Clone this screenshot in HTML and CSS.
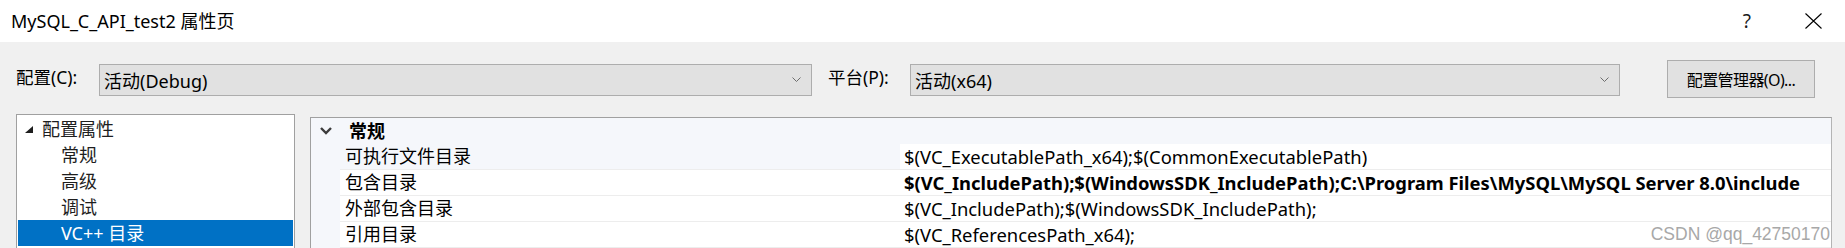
FILE: index.html
```html
<!DOCTYPE html>
<html lang="zh-CN">
<head>
  <meta charset="UTF-8" />
  <title>MySQL_C_API_test2 属性页</title>
  <link rel="stylesheet" href="styles.css">
</head>
<body>
  <div class="dialog">
    <header class="title-bar">
      <div class="title">MySQL_C_API_test2 属性页</div>
      <div class="title-actions">
        <span class="help">?</span>
        <svg class="close" width="17" height="16" viewBox="0 0 17 16">
          <path d="M0.5 0.5 L16.5 15.5 M16.5 0.5 L0.5 15.5" stroke="#000" stroke-width="1.1" fill="none" />
        </svg>
      </div>
    </header>

    <div class="toolbar">
      <label class="field-label label-config">配置(C):</label>
      <div class="combo combo-config">
        <span>活动(Debug)</span>
        <svg class="combo-arrow" width="9" height="6" viewBox="0 0 9 6"><path d="M0.5 0.5 L4.5 4.5 L8.5 0.5" stroke="#6d6d6d" stroke-width="1" fill="none" /></svg>
      </div>
      <label class="field-label label-platform">平台(P):</label>
      <div class="combo combo-platform">
        <span>活动(x64)</span>
        <svg class="combo-arrow" width="9" height="6" viewBox="0 0 9 6"><path d="M0.5 0.5 L4.5 4.5 L8.5 0.5" stroke="#6d6d6d" stroke-width="1" fill="none" /></svg>
      </div>
      <button class="btn-manager">配置管理器(O)...</button>
    </div>

    <div class="main">
      <ul class="tree">
        <li class="tree-node">
          <svg class="tree-toggle" width="9" height="7" viewBox="0 0 9 7"><polygon points="8,0 8,7 0,7" fill="#1e1e1e" /></svg>
          <span>配置属性</span>
        </li>
        <li class="tree-leaf">常规</li>
        <li class="tree-leaf">高级</li>
        <li class="tree-leaf">调试</li>
        <li class="tree-leaf selected">VC++ 目录</li>
      </ul>

      <div class="grid-panel">
        <div class="category">
          <svg class="chevron" width="12" height="8" viewBox="0 0 12 8"><path d="M1 1 L6 6 L11 1" stroke="#3c3c3c" stroke-width="2.4" fill="none" /></svg>
          <span>常规</span>
        </div>
        <div class="prop-row active">
          <div class="prop-name">可执行文件目录</div>
          <div class="prop-value">$(VC_ExecutablePath_x64);$(CommonExecutablePath)</div>
        </div>
        <div class="prop-row">
          <div class="prop-name">包含目录</div>
          <div class="prop-value modified">$(VC_IncludePath);$(WindowsSDK_IncludePath);C:\Program Files\MySQL\MySQL Server 8.0\include</div>
        </div>
        <div class="prop-row">
          <div class="prop-name">外部包含目录</div>
          <div class="prop-value">$(VC_IncludePath);$(WindowsSDK_IncludePath);</div>
        </div>
        <div class="prop-row">
          <div class="prop-name">引用目录</div>
          <div class="prop-value">$(VC_ReferencesPath_x64);</div>
        </div>
        <div class="watermark">CSDN @qq_42750170</div>
      </div>
    </div>
  </div>
</body>
</html>
```

FILE: styles.css
```css
:root {
  --dialog-bg: #f0f0f0;
  --ctrl-bg: #e1e1e1;
  --ctrl-border: #adadad;
  --panel-border: #a0a0a0;
  --panel-bg: #f5f7fb;
  --select-blue: #0071c5;
  --row-line: #ededed;
  --ui-font: "Noto Sans", "Noto Sans CJK SC", sans-serif;
}
* { box-sizing: border-box; margin: 0; padding: 0; }
body {
  width: 1845px;
  height: 248px;
  overflow: hidden;
  background: var(--dialog-bg);
  font-family: var(--ui-font);
  font-size: 17px;
  color: #000;
}
.dialog {
  display: flex;
  flex-direction: column;
  height: 248px;
  overflow: hidden;
}

/* title bar */
.title-bar {
  flex-shrink: 0;
  height: 42px;
  background: #fff;
  display: flex;
  align-items: center;
  justify-content: space-between;
  padding-left: 11px;
  padding-right: 23px;
}
.title {
  font-size: 18px;
  line-height: 1;
  padding-bottom: 1px;
}
.title-actions {
  display: flex;
  align-items: center;
  gap: 54px;
}
.help {
  font-size: 19px;
  line-height: 1;
  color: #1a1a1a;
}
.close { display: block; }

/* config row */
.toolbar {
  flex-shrink: 0;
  display: flex;
  align-items: center;
  height: 72px;
  padding-left: 16px;
}
.field-label {
  line-height: 1;
  font-size: 17.5px;
}
.label-config { width: 83px; }
.label-platform { width: 82px; margin-left: 16px; }
.combo {
  height: 32px;
  background: var(--ctrl-bg);
  border: 1px solid var(--ctrl-border);
  display: flex;
  align-items: center;
  justify-content: space-between;
  padding: 0 10px 0 4px;
  font-size: 18px;
  margin-top: 3px;
}
.combo-config { width: 713px; }
.combo-platform { width: 710px; }
.combo-arrow { display: block; }
.btn-manager {
  margin-left: 47px;
  width: 148px;
  height: 38px;
  background: var(--ctrl-bg);
  border: 1px solid var(--ctrl-border);
  font-family: var(--ui-font);
  font-size: 16px;
  letter-spacing: -0.6px;
  color: #000;
  margin-top: 1px;
}

/* lower area */
.main {
  flex-shrink: 0;
  display: flex;
  align-items: flex-start;
  padding-left: 16px;
}
.tree {
  list-style: none;
  width: 279px;
  height: 135px;
  background: #fff;
  border: 1px solid var(--panel-border);
  padding: 1px;
}
.tree li {
  height: 26px;
  display: flex;
  align-items: center;
  font-size: 18px;
  line-height: 1;
  color: #1e1e1e;
}
.tree-node { padding-left: 7px; gap: 8px; }
.tree-toggle { display: block; margin-top: 1px; }
.tree-leaf { padding-left: 43px; }
.tree-leaf.selected {
  background: var(--select-blue);
  color: #fff;
}

.grid-panel {
  position: relative;
  margin-left: 15px;
  margin-top: 3px;
  width: 1522px;
  height: 132px;
  background: var(--panel-bg);
  border: 1px solid var(--panel-border);
  border-right-color: #b4b4b4;
}
.category {
  height: 26px;
  display: flex;
  align-items: center;
  padding-left: 9px;
  gap: 17px;
  font-weight: 700;
  font-size: 18px;
  line-height: 1;
}
.chevron { display: block; }
.prop-row {
  margin-left: 29px;
  height: 26px;
  display: grid;
  grid-template-columns: 560px 1fr;
  border-bottom: 1px solid var(--row-line);
  font-size: 18.4px;
  line-height: 25px;
}
.prop-name {
  background: #fff;
  padding-left: 5px;
  font-size: 18px;
}
.prop-row.active .prop-name { background: var(--panel-bg); }
.prop-value {
  background: #fff;
  padding-left: 4px;
  white-space: nowrap;
  overflow: hidden;
}
.prop-value.modified { font-weight: 700; }

.watermark {
  position: absolute;
  right: 1px;
  top: 106px;
  font-family: "Liberation Sans", Arial, sans-serif;
  font-size: 17.5px;
  color: #a8a8a8;
  text-shadow: 0 0 2px #fff;
}
```
